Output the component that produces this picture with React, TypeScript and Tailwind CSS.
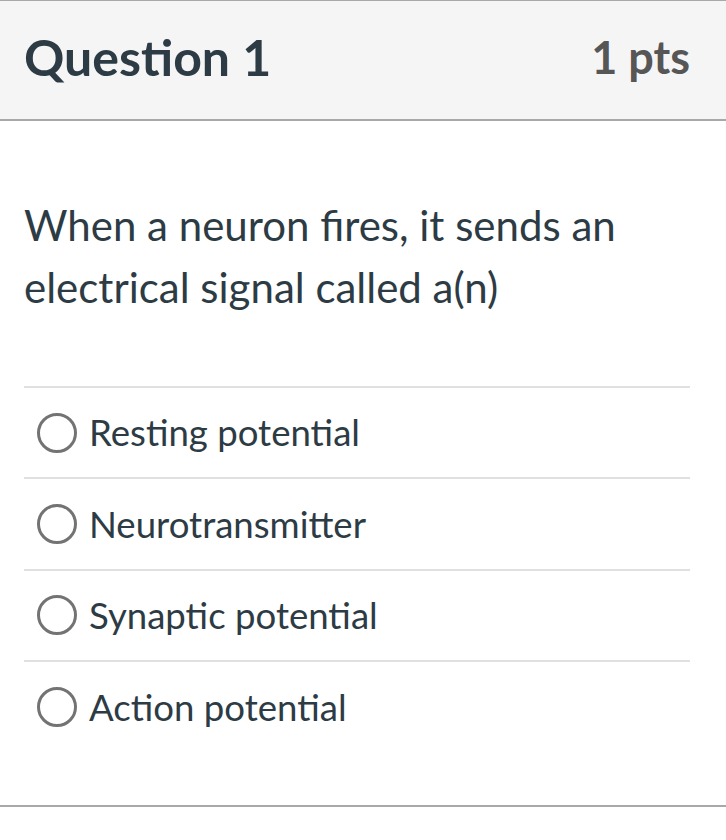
import React from 'react';

const answers = ['Resting potential', 'Neurotransmitter', 'Synaptic potential', 'Action potential'];

const App: React.FC = () => {
    return (
        <div className="w-full min-h-[840px] bg-white" style={{ fontFamily: 'Lato, "Noto Sans", sans-serif' }}>
            {/* Header */}
            <div className="h-[121px] bg-[#f5f5f5] border-t border-[#a8a8a8] border-b-2 flex items-center justify-between pl-6 pr-9 pb-[6px]">
                <div className="text-[50px] font-bold text-[#2d3b45] leading-none">Question 1</div>
                <div className="text-[45px] font-bold text-[#565656] leading-none">1 pts</div>
            </div>

            {/* Body */}
            <div className="px-6 border-b-2 border-[#a8a8a8]">
                <div className="pt-[73px] pb-[68px] text-[42px] leading-[62px] text-[#2d3b45]">
                    When a neuron fires, it sends an electrical signal called a(n)
                </div>

                <div className="pr-[12px] pb-[53px]">
                    {answers.map((answer, i) => (
                        <div key={i} className="flex items-center h-[91.4px] border-t-2 border-[#e0e0e0]">
                            <div className="w-[40px] h-[40px] rounded-full border-[3px] border-[#737373] ml-[13px] shrink-0"></div>
                            <div className="ml-[12px] text-[36.6px] text-[#2d3b45] leading-none">{answer}</div>
                        </div>
                    ))}
                </div>
            </div>
        </div>
    );
};

export default App;
